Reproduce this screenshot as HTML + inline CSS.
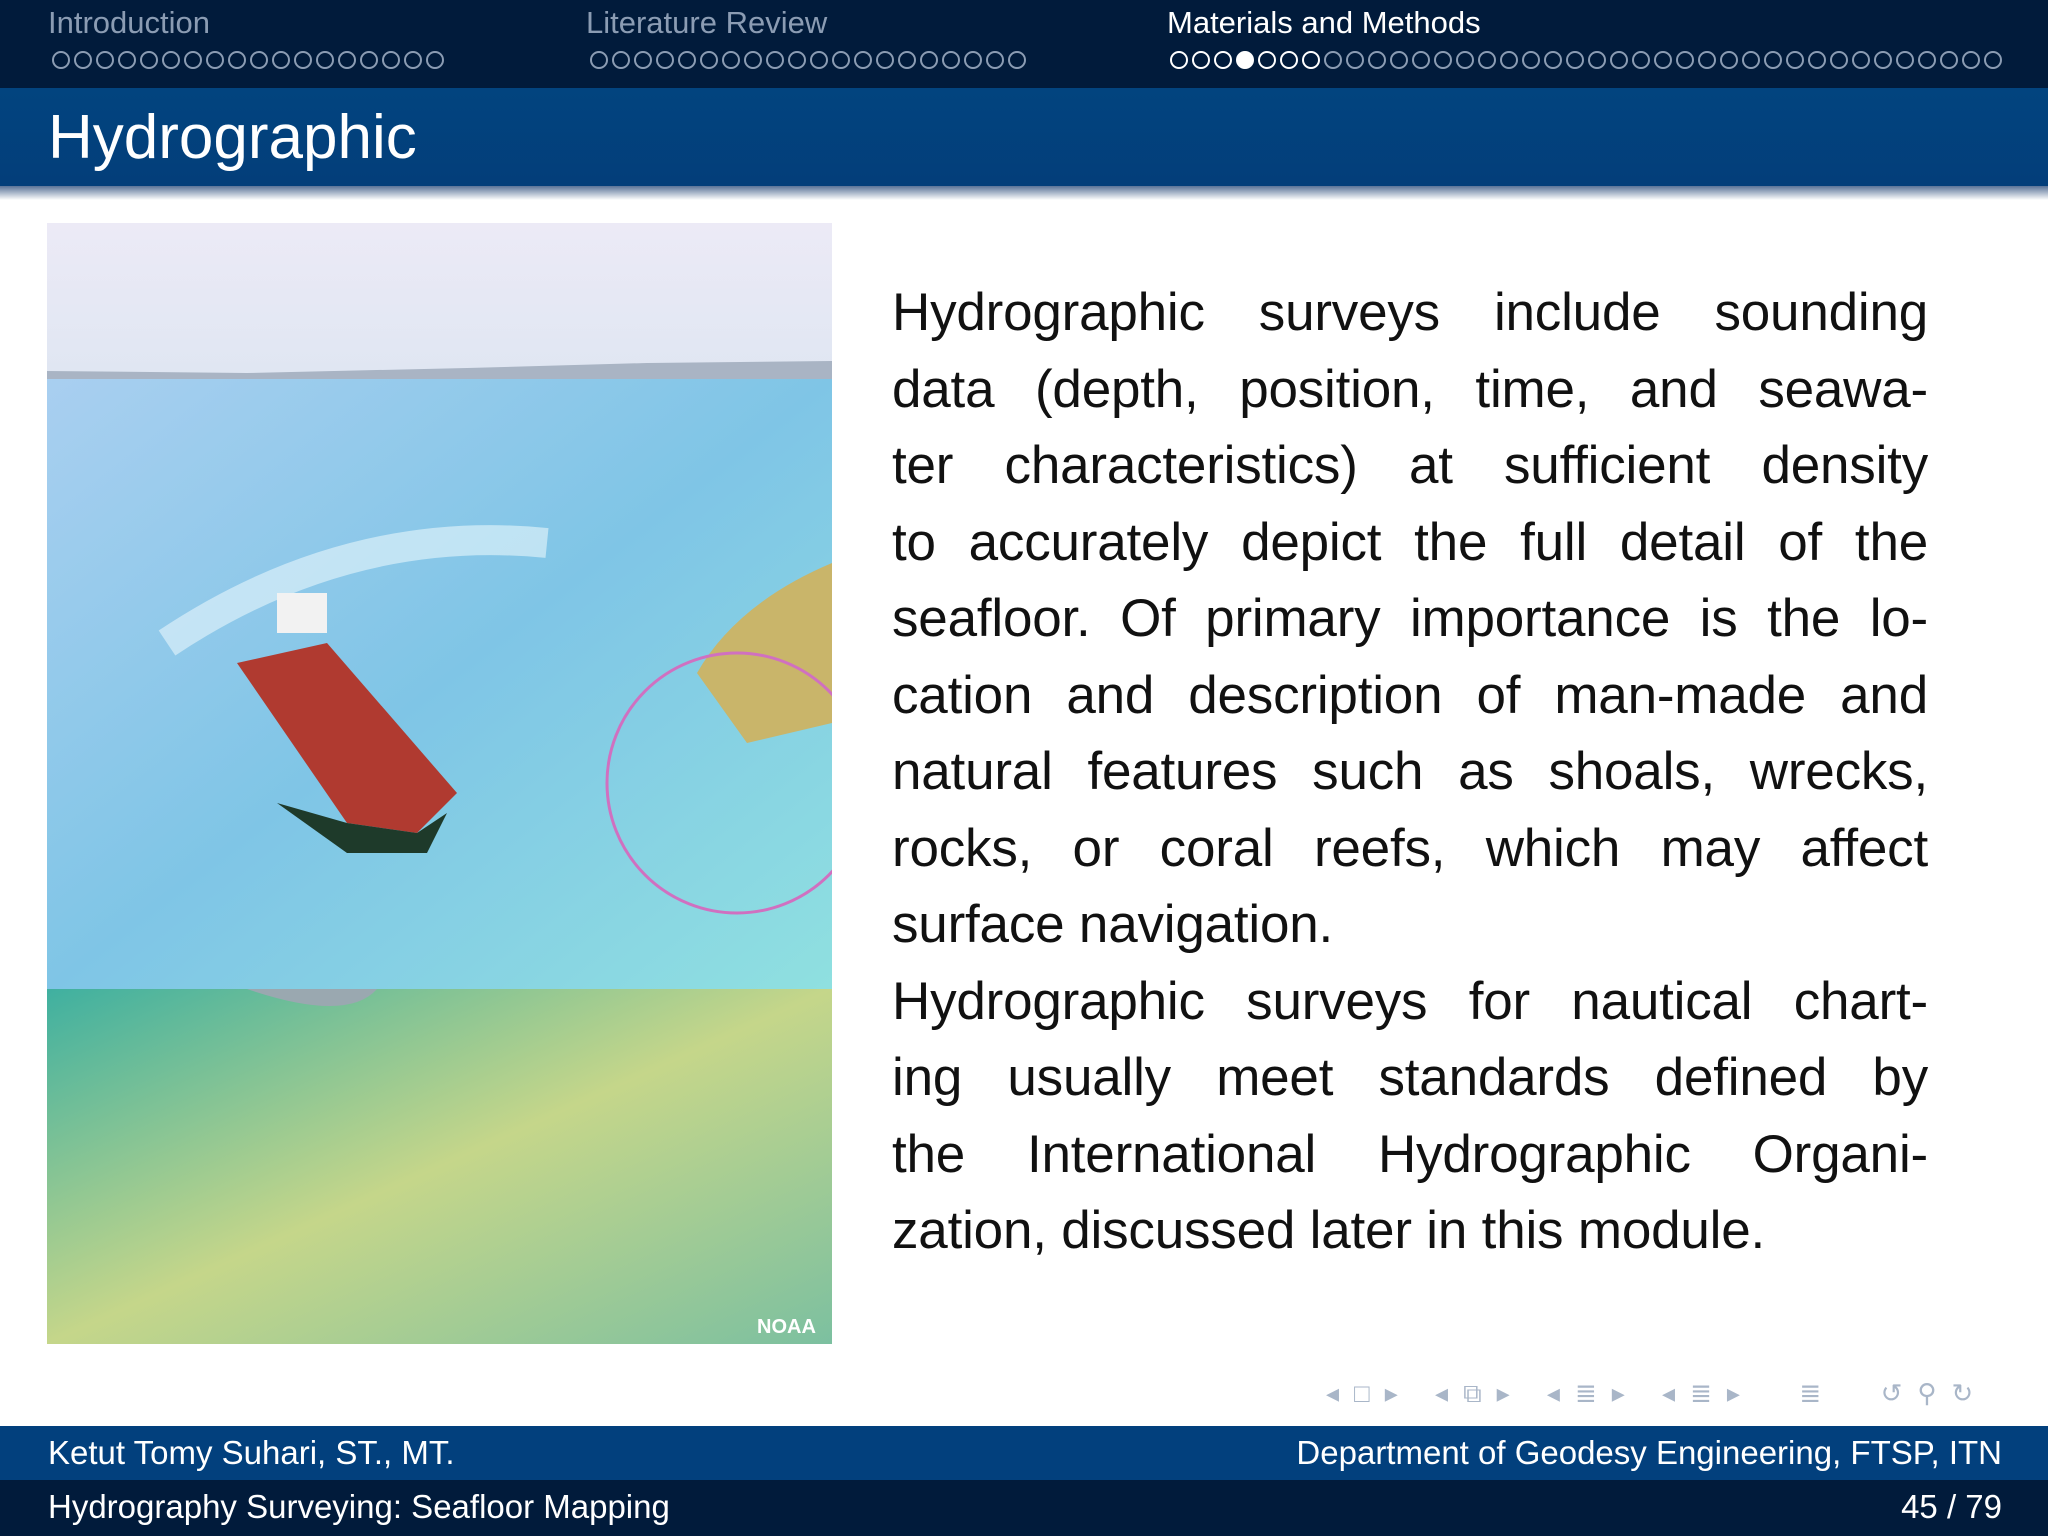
<!DOCTYPE html>
<html><head><meta charset="utf-8"><style>
*{margin:0;padding:0;box-sizing:border-box}
body{width:2048px;height:1536px;position:relative;background:#fff;font-family:"Liberation Sans","DejaVu Sans",sans-serif;overflow:hidden}
#top{position:absolute;left:0;top:0;width:2048px;height:88px;background:#011b3b}
.sec{position:absolute;top:5px;font-size:31px;color:#8b9cb3}
.dots{position:absolute;top:51px;display:flex}
.dots i{display:block;width:18px;height:18px;border:2px solid #8b9cb3;border-radius:50%;margin-right:4px}
.dots i.w{border-color:#fff}
.dots i.f{background:#fff;border-color:#fff}
#title{position:absolute;left:0;top:88px;width:2048px;height:98px;background:linear-gradient(#02447f,#033e7a)}
#title span{position:absolute;left:48px;top:14px;font-size:62px;color:#fff}
#shadow{position:absolute;left:0;top:186px;width:2048px;height:14px;background:linear-gradient(#5a7398,#fff)}
#img{position:absolute;left:47px;top:223px;width:785px;height:1121px;overflow:hidden}
#txt{position:absolute;left:892px;top:275px;width:1036px;font-size:53px;line-height:76.5px;color:#111;letter-spacing:-0.2px}
#txt div{text-align:justify;text-align-last:justify;white-space:nowrap}
#txt div.n{text-align-last:left}
#f1{position:absolute;left:0;top:1426px;width:2048px;height:54px;background:#02407d;color:#fff;font-size:33px}
#f2{position:absolute;left:0;top:1480px;width:2048px;height:56px;background:#011b3b;color:#fff;font-size:33px}
.fl{position:absolute;left:48px;top:8px}.fr{position:absolute;right:46px;top:8px}
#nav{position:absolute;left:1326px;top:1378px;font-size:26px;color:#a9b6c8;letter-spacing:15px;white-space:nowrap}
</style></head><body>
<div id="top">
<div class="sec" style="left:48px">Introduction</div>
<div class="sec" style="left:586px">Literature Review</div>
<div class="sec" style="left:1167px;color:#fff">Materials and Methods</div>
<div class="dots" style="left:52px"><i></i><i></i><i></i><i></i><i></i><i></i><i></i><i></i><i></i><i></i><i></i><i></i><i></i><i></i><i></i><i></i><i></i><i></i></div>
<div class="dots" style="left:590px"><i></i><i></i><i></i><i></i><i></i><i></i><i></i><i></i><i></i><i></i><i></i><i></i><i></i><i></i><i></i><i></i><i></i><i></i><i></i><i></i></div>
<div class="dots" style="left:1170px"><i class="w"></i><i class="w"></i><i class="w"></i><i class="f"></i><i class="w"></i><i class="w"></i><i class="w"></i><i></i><i></i><i></i><i></i><i></i><i></i><i></i><i></i><i></i><i></i><i></i><i></i><i></i><i></i><i></i><i></i><i></i><i></i><i></i><i></i><i></i><i></i><i></i><i></i><i></i><i></i><i></i><i></i><i></i><i></i><i></i></div>
</div>
<div id="title"><span>Hydrographic</span></div>
<div id="shadow"></div>
<div id="img">
<svg width="785" height="1121" viewBox="0 0 785 1121">
<defs>
<linearGradient id="sky" x1="0" y1="0" x2="0" y2="1"><stop offset="0" stop-color="#eceaf6"/><stop offset="1" stop-color="#dfe6f2"/></linearGradient>
<linearGradient id="sea" x1="0" y1="0" x2="1" y2="1"><stop offset="0" stop-color="#a9cff0"/><stop offset="0.5" stop-color="#7fc5e6"/><stop offset="1" stop-color="#8fe0e0"/></linearGradient>
<linearGradient id="floor" x1="0" y1="0" x2="1" y2="1"><stop offset="0" stop-color="#3fb0a0"/><stop offset="0.5" stop-color="#c5d68a"/><stop offset="1" stop-color="#7cc0a0"/></linearGradient>
</defs>
<rect width="785" height="160" fill="url(#sky)"/>
<path d="M0 148 L200 150 L420 145 L600 140 L785 138 L785 160 L0 160Z" fill="#a9b4c4"/>
<rect y="156" width="785" height="610" fill="url(#sea)"/>
<path d="M120 420 Q300 300 500 320" stroke="#e8f6fb" stroke-width="30" fill="none" opacity=".6"/>
<path d="M785 340 Q690 380 650 450 L700 520 L785 500Z" fill="#c9b56a"/>
<circle cx="690" cy="560" r="130" fill="none" stroke="#d070c0" stroke-width="3"/>
<path d="M190 440 L280 420 L410 570 L370 610 L300 600 Z" fill="#b03a30"/>
<path d="M230 580 L300 600 L370 610 L400 590 L380 630 L300 630Z" fill="#1e3a2a"/>
<rect x="230" y="370" width="50" height="40" fill="#f2f2f2"/>
<rect y="766" width="785" height="355" fill="url(#floor)"/>
<path d="M200 766 Q300 800 330 766Z" fill="#9aa8b0"/>
<text x="710" y="1110" font-family="Liberation Sans" font-size="20" font-weight="bold" fill="#fff">NOAA</text>
</svg>
</div>
<div id="txt">
<div>Hydrographic surveys include sounding</div>
<div>data (depth, position, time, and seawa-</div>
<div>ter characteristics) at sufficient density</div>
<div>to accurately depict the full detail of the</div>
<div>seafloor. Of primary importance is the lo-</div>
<div>cation and description of man-made and</div>
<div>natural features such as shoals, wrecks,</div>
<div>rocks, or coral reefs, which may affect</div>
<div class="n">surface navigation.</div>
<div>Hydrographic surveys for nautical chart-</div>
<div>ing usually meet standards defined by</div>
<div>the International Hydrographic Organi-</div>
<div class="n">zation, discussed later in this module.</div>
</div>
<div id="nav">◂□▸ ◂⧉▸ ◂≣▸ ◂≣▸ &nbsp;≣ &nbsp;↺⚲↻</div>
<div id="f1"><span class="fl">Ketut Tomy Suhari, ST., MT.</span><span class="fr">Department of Geodesy Engineering, FTSP, ITN</span></div>
<div id="f2"><span class="fl">Hydrography Surveying: Seafloor Mapping</span><span class="fr">45 / 79</span></div>
</body></html>
